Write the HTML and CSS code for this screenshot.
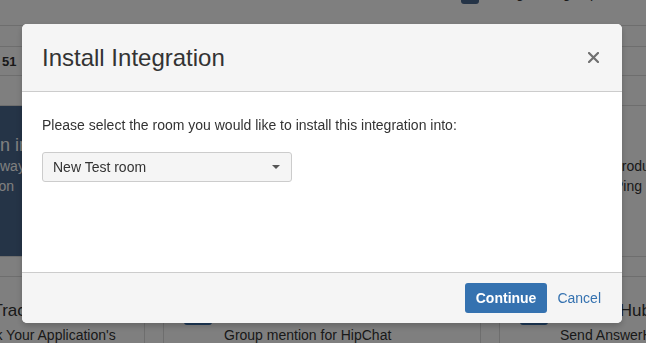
FILE: index.html
```html
<!DOCTYPE html>
<html lang="en">
<head>
  <meta charset="UTF-8">
  <title>Install Integration</title>
  <link rel="stylesheet" href="styles.css">
</head>
<body>

  <!-- page behind the dialog -->
  <header class="topbar">
    <div class="nav">
      <a class="nav-btn" href="#" aria-label="Create"></a>
      <a class="nav-link" href="#">Log in / Sign up for free</a>
    </div>
  </header>

  <div class="subbar">
    <div class="filters"><span class="count">51</span></div>
  </div>

  <section class="carousel">
    <div class="slide dark">
      <h3>Join in</h3>
      <p>The way your team works</p>
      <p>Get on</p>
    </div>
    <div class="slide light">
      <p>products that fit your workflow</p>
      <p>Ping any room with updates</p>
    </div>
  </section>

  <section class="cards">
    <div class="card first">
      <div class="card-head"><span class="card-icon"></span><h4>UI Tracker</h4></div>
      <p>Track Your Application's</p>
      <p>errors in HipChat</p>
    </div>
    <div class="card">
      <div class="card-head"><span class="card-icon"></span><h4>HipChat Mentions</h4></div>
      <p>Group mention for HipChat</p>
    </div>
    <div class="card">
      <div class="card-head"><span class="card-icon"></span><h4>AnswerHub</h4></div>
      <p>Send AnswerHub questions to HipChat</p>
    </div>
  </section>

  <!-- dialog -->
  <div class="blanket"></div>
  <div class="dialog">
    <div class="dialog-header">
      <h2>Install Integration</h2>
      <a class="close" href="#" aria-label="Close">
        <svg width="11" height="11" viewBox="0 0 11 11"><path d="M1 1L10 10M10 1L1 10" stroke="#707070" stroke-width="2.2" stroke-linecap="round"/></svg>
      </a>
    </div>
    <div class="dialog-body">
      <p>Please select the room you would like to install this integration into:</p>
      <div class="select">
        <span>New Test room</span>
        <span class="caret"></span>
      </div>
    </div>
    <div class="dialog-footer">
      <button class="btn-primary">Continue</button>
      <a class="cancel" href="#">Cancel</a>
    </div>
  </div>

</body>
</html>
```

FILE: styles.css
```css
* {box-sizing:border-box; margin:0; padding:0;}
html, body {height:100%;}
body {
  font-family:"Liberation Sans", Arial, sans-serif;
  font-size:14px; color:#333; background:#fff;
  overflow:hidden;
}
a {text-decoration:none; color:inherit;}

/* page */
.topbar {
  height:26px; border-bottom:1px solid #ddd;
  padding-left:461px; overflow:hidden;
}
.nav {display:flex; align-items:flex-end; gap:21px; height:30px; margin-top:-26px;}
.nav-btn {
  display:block; width:38px; height:30px; border-radius:3px;
  background:#4a688e;
}
.nav-link {line-height:16px; margin-bottom:3px; white-space:nowrap;}

.subbar {height:80px; border-bottom:1px solid #ddd; padding-top:20px;}
.filters {
  height:30px; border-top:1px solid #ddd; border-bottom:1px solid #ddd;
  display:flex; align-items:center; padding-left:2px;
}
.count {font-weight:bold; font-size:13px; color:#333;}

.carousel {display:flex; height:151px; border-bottom:1px solid #ddd;}
.slide {flex:0 0 auto; white-space:nowrap; min-width:0;}
.slide p {line-height:20px;}
.dark {
  width:628px; margin-left:-28px; background:#4a688e; color:#fff;
  padding-top:29px;
}
.dark h3 {font-size:18px; font-weight:normal; line-height:21px; padding-left:5px;}
.light {flex:1; padding:50px 0 0 14px;}

.cards {display:flex; gap:18px; margin:19px 0 0 -93px;}
.card {
  flex:0 0 318px; min-width:0; overflow:hidden;
  border:1px solid #ddd; border-radius:3px;
  padding:20px 20px 0; height:120px; white-space:nowrap;
}
.card.first {flex-basis:238px;}
.card-head {display:flex; align-items:center; gap:15px; height:28px;}
.card-icon {
  flex:none; width:28px; height:28px; border:2px solid #3b73af; border-radius:3px;
  background:#e9f0f8;
}
.card-head h4 {font-size:17px; font-weight:normal;}
.card p {padding-left:40px; line-height:20px;}

/* dialog */
.blanket {position:fixed; inset:0; background:rgba(0,0,0,.5);}
.dialog {
  position:fixed; left:22px; top:24px; width:600px;
  background:#fff; border-radius:5px; overflow:hidden;
  box-shadow:0 3px 6px rgba(0,0,0,.2);
}
.dialog-header {
  height:68px; background:#f5f5f5; border-bottom:1px solid #ccc;
  display:flex; align-items:center; justify-content:space-between;
  padding:0 23px 0 20px;
}
.dialog-header h2 {font-size:24px; font-weight:normal; color:#333;}
.close {display:flex;}
.dialog-body {height:180px; padding:23px 20px 0;}
.dialog-body p {line-height:20px;}
.select {
  width:250px; height:30px; margin-top:17px;
  background:#f5f5f5; border:1px solid #ccc; border-radius:3px;
  display:flex; align-items:center; justify-content:space-between;
  padding:0 11px 0 10px;
}
.caret {
  width:0; height:0;
  border-left:4px solid transparent; border-right:4px solid transparent;
  border-top:4px solid #555;
}
.dialog-footer {
  height:51px; background:#f5f5f5; border-top:1px solid #ccc;
  display:flex; align-items:center; justify-content:flex-end; gap:10px;
  padding:0 21px;
}
.btn-primary {
  height:30px; padding:0 11px; border:none; border-radius:3px;
  background:#3572b0; color:#fff; font:bold 14px "Liberation Sans", Arial, sans-serif;
}
.cancel {color:#3572b0;}
```
